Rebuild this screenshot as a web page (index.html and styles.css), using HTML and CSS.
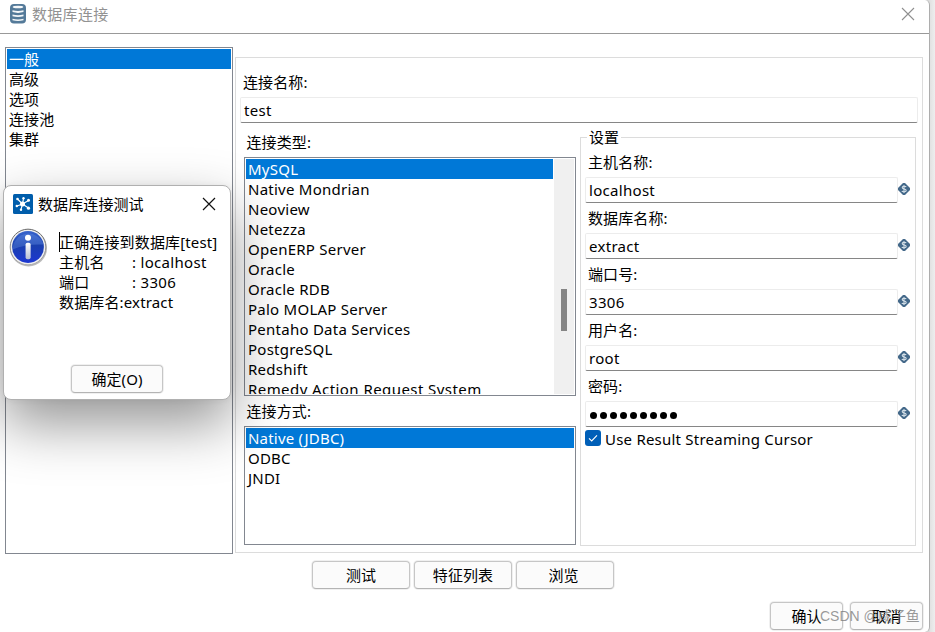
FILE: index.html
```
<!DOCTYPE html>
<html lang="zh-CN">
<head>
<meta charset="utf-8">
<title>数据库连接</title>
<link rel="stylesheet" href="styles.css">
</head>
<body>
<svg class="defs" width="0" height="0">
  <symbol id="var" viewBox="0 0 12 12">
    <path d="M5 0h2L12 5v2L7 12H5L0 7V5z" fill="#44698a"/>
    <path d="M8.2 3.9C7.5 3.100 4.200 2.800 4.200 4.600S8.200 5.700 8.200 7.400 4.600 9 3.800 8.100M6 2v8" fill="none" stroke="#d5e0e8" stroke-width="1.100"/>
  </symbol>
</svg>
<div class="window">
  <header class="titlebar">
    <svg class="db-icon" viewBox="0 0 18 22">
      <rect x="1" y="1" width="16" height="19.500" rx="4" fill="#547a99"/>
      <g fill="#f4f7f9"><ellipse cx="9" cy="4" rx="5.300" ry="1.300"/><path d="M3.500 7.300q5.500 1.600 11 0v1.800q-5.500 1.600-11 0zM3.500 11.500q5.500 1.600 11 0v1.800q-5.500 1.600-11 0zM3.500 15.700q5.500 1.600 11 0v1.500q-5.500 1.600-11 0z"/></g>
    </svg>
    <span class="title">数据库连接</span>
    <svg class="close" viewBox="0 0 14 14"><path d="M1 1l12 12M13 1L1 13" stroke="#8f8f8f" stroke-width="1.100"/></svg>
  </header>
  <div class="content">
    <ul class="list sidebar">
      <li class="selected">一般</li><li>高级</li><li>选项</li><li>连接池</li><li>集群</li>
    </ul>
    <main class="panel">
      <div class="label name-label">连接名称:</div>
      <div class="input">test</div>
      <div class="columns">
        <section class="types">
          <div class="label">连接类型:</div>
          <div class="list type-list">
            <ul class="rows">
              <li class="selected">MySQL</li><li>Native Mondrian</li><li>Neoview</li><li>Netezza</li><li>OpenERP Server</li><li>Oracle</li><li>Oracle RDB</li><li>Palo MOLAP Server</li><li>Pentaho Data Services</li><li>PostgreSQL</li><li>Redshift</li><li class="long">Remedy Action Request System</li>
            </ul>
            <div class="scrollbar"><div class="thumb"></div></div>
          </div>
          <div class="label access-label">连接方式:</div>
          <ul class="list access-list">
            <li class="selected">Native (JDBC)</li><li>ODBC</li><li>JNDI</li>
          </ul>
        </section>
        <section class="settings">
          <div class="legend">设置</div>
          <div class="field"><div class="label">主机名称:</div><div class="control"><div class="input">localhost</div><svg class="var"><use href="#var"/></svg></div></div>
          <div class="field"><div class="label">数据库名称:</div><div class="control"><div class="input">extract</div><svg class="var"><use href="#var"/></svg></div></div>
          <div class="field"><div class="label">端口号:</div><div class="control"><div class="input">3306</div><svg class="var"><use href="#var"/></svg></div></div>
          <div class="field"><div class="label">用户名:</div><div class="control"><div class="input">root</div><svg class="var"><use href="#var"/></svg></div></div>
          <div class="field"><div class="label">密码:</div><div class="control"><div class="input password"><i></i><i></i><i></i><i></i><i></i><i></i><i></i><i></i><i></i></div><svg class="var"><use href="#var"/></svg></div></div>
          <div class="check"><svg viewBox="0 0 16 16"><rect width="16" height="16" rx="3" fill="#005fb8"/><path d="M4 8.300l2.700 2.600L12 5.400" fill="none" stroke="#fff" stroke-width="1.100"/></svg><span>Use Result Streaming Cursor</span></div>
        </section>
      </div>
    </main>
  </div>
  <div class="actions"><div class="button">测试</div><div class="button">特征列表</div><div class="button">浏览</div></div>
  <div class="footer"><div class="button">确认</div><div class="button">取消</div></div>
</div>
<div class="dialog">
  <div class="dialog-title">
    <svg class="app-icon" viewBox="0 0 20 20">
      <rect width="20" height="20" rx="1.500" fill="#005dab"/>
      <path d="M9.500 10L4.500 5M9.500 10l1-5.500M9.500 10l6-3.500M9.500 10l6 4M9.500 10L8 15.500M9.500 10l-5.500 2" stroke="#fff" stroke-width="1.100"/>
      <g fill="#fff"><circle cx="9.500" cy="10" r="2.500"/><circle cx="4.500" cy="5" r="1.300"/><circle cx="10.500" cy="4.300" r="1.200"/><circle cx="15.500" cy="6.300" r="1.500"/><circle cx="15.500" cy="14.200" r="1.600"/><circle cx="8" cy="15.800" r="1.200"/><circle cx="3.800" cy="12" r="1.200"/></g>
    </svg>
    <span>数据库连接测试</span>
    <svg class="close" viewBox="0 0 14 14"><path d="M1 1l12 12M13 1L1 13" stroke="#111" stroke-width="1.200"/></svg>
  </div>
  <div class="dialog-body">
    <svg class="info" viewBox="0 0 40 40">
      <defs>
        <linearGradient id="blue" x1="0" y1="0" x2="0" y2="1"><stop offset="0" stop-color="#3864cc"/><stop offset=".45" stop-color="#1a3fae"/><stop offset="1" stop-color="#1d38d2"/></linearGradient>
        <linearGradient id="ring" x1="0" y1="0" x2="0" y2="1"><stop offset="0" stop-color="#666"/><stop offset="1" stop-color="#aaa"/></linearGradient>
        <linearGradient id="stem" x1="0" y1="0" x2="0" y2="1"><stop offset="0" stop-color="#fff"/><stop offset="1" stop-color="#b9c0d4"/></linearGradient>
      </defs>
      <circle cx="20" cy="20.500" r="19" fill="#bbb"/>
      <circle cx="19.500" cy="19.500" r="18.300" fill="#eee" stroke="url(#ring)"/>
      <circle cx="19.500" cy="19.500" r="16.300" fill="url(#blue)"/>
      <path d="M3.700 22a16.300 16.300 0 0 1 31.800-5Q18 16 3.700 22z" fill="#6b94e6" opacity=".35"/>
      <circle cx="19.500" cy="10" r="3.100" fill="#fff"/><rect x="17" y="15" width="5.200" height="17" rx="2" fill="url(#stem)"/>
    </svg>
    <div class="message">
      <div class="caret-line">正确连接到数据库[test]</div>
      <div class="pair"><span>主机名</span><span>: localhost</span></div>
      <div class="pair"><span>端口</span><span>: 3306</span></div>
      <div>数据库名:extract</div>
    </div>
  </div>
  <div class="button ok">确定(O)</div>
</div>
<div class="watermark">CSDN @咸子鱼</div>
</body>
</html>
```

FILE: styles.css
```
* { box-sizing: border-box; }
body {
  margin: 0;
  width: 935px;
  height: 632px;
  overflow: hidden;
  position: relative;
  background: linear-gradient(90deg, #d8d8d8 929px, #e2e2e2 930px, #eee 935px);
  color: #000;
  font: 15px/20px "Noto Sans", "Noto Sans CJK SC", sans-serif;
  letter-spacing: .1px;
  white-space: nowrap;
}
ul { list-style: none; margin: 0; padding: 0; }
svg { display: block; flex: none; }
.defs { position: absolute; }
.window {
  width: 930px;
  height: 632px;
  background: #fff;
  border-right: 1px solid #adadad;
  border-radius: 0 5px 5px 0;
}
.titlebar {
  height: 34px;
  display: flex;
  align-items: flex-start;
  padding: 4px 14px 0 9px;
  border-bottom: 1px solid #999;
  color: #929292;
}
.db-icon { width: 18px; height: 22px; margin-top: -1px; }
.title { margin-left: 5px; letter-spacing: .3px; }
.close { width: 14px; height: 14px; margin: 3px 0 0 auto; }
.content { display: flex; padding: 13px 6px 0 5px; }
.list { border: 1px solid #828790; padding: 1px; background: #fff; }
.list li { height: 20px; padding-left: 2px; }
.list .selected { background: #0078d7; color: #fff; }
.sidebar { width: 228px; height: 507px; }
.panel {
  width: 688px;
  height: 496px;
  margin: 10px 0 0 2px;
  padding: 14px 5px 0 5px;
  border: 1px solid #dcdcdc;
}
.name-label { margin-left: 2px; }
.label { height: 20px; }
.input {
  height: 26px;
  padding: 2px 0 0 3px;
  border: 1px solid #ececec;
  border-bottom-color: #868686;
  border-radius: 2px;
  letter-spacing: .3px;
}
.panel > .input { margin: 5px -1px 0 -1px; }
.columns { display: flex; }
.types { width: 332px; margin-left: 3px; padding-top: 9px; }
.types .label { padding-left: 2.5px; }
.type-list { display: flex; height: 239px; margin-top: 5px; letter-spacing: .25px; }
.long { letter-spacing: .43px; }
.rows { width: 307px; height: 235px; overflow: hidden; }
.scrollbar { width: 20px; margin-left: 1px; background: #f0f0f0; padding: 130px 0 0 7px; }
.thumb { width: 6px; height: 42px; background: #858585; }
.access-label { margin-top: 5px; }
.access-list { height: 119px; margin-top: 5px; letter-spacing: .2px; }
.settings {
  width: 336px;
  height: 409px;
  margin: 14px 0 0 4px;
  padding: 0 4px;
  border: 1px solid #dcdcdc;
}
.legend { width: 34px; height: 20px; margin: -11px 0 5px 2px; padding-left: 2px; background: #fff; }
.field { height: 56px; }
.field .label { padding-left: 3px; }
.control { display: flex; margin-top: 5px; }
.control .input { width: 313px; }
.var { width: 12px; height: 12px; margin-top: 6px; }
.password { display: flex; gap: 3px; padding: 10px 0 0 4px; }
.password i { width: 7px; height: 7px; border-radius: 50%; background: #000; }
.check { display: flex; gap: 4px; height: 20px; margin-top: -3px; letter-spacing: .22px; }
.check svg { width: 16px; height: 16px; margin-top: 1px; }
.button {
  height: 28px;
  border: 1px solid #c6c6c6;
  border-bottom-color: #b4b4b4;
  border-radius: 4px;
  background: #fbfbfb;
  box-shadow: 0 0 0 1px #f0f0f0;
  padding-top: 3px;
  text-align: center;
}
.actions { display: flex; gap: 4px; padding: 7px 0 0 312px; }
.actions .button { width: 98px; }
.actions .button:last-child { padding-right: 3px; }
.footer { display: flex; gap: 7px; padding: 13px 0 0 770px; }
.footer .button { width: 73px; }
.dialog {
  position: absolute;
  left: 3px;
  top: 185px;
  width: 228px;
  height: 215px;
  background: #fff;
  border: 1px solid #b0b0b0;
  border-radius: 8px;
  box-shadow: 0 24px 56px rgba(0, 0, 0, .42), 0 0 6px rgba(0, 0, 0, .06);
}
.dialog-title { display: flex; height: 38px; padding: 8px 14px 0 9px; }
.app-icon { width: 20px; height: 20px; margin-right: 5px; }
.dialog-body { display: flex; height: 141px; padding: 4px 0 0 5px; }
.info { width: 39px; height: 39px; margin-right: 11px; }
.message { padding-top: 4px; letter-spacing: .15px; }
.caret-line { border-left: 1px solid #000; text-indent: -1px; }
.pair { display: grid; grid-template-columns: 73px auto; letter-spacing: .3px; }
.ok { width: 92px; margin-left: 67px; }
.watermark {
  position: absolute;
  left: 820px;
  top: 606px;
  color: rgba(120, 120, 120, .75);
  font: 14px/20px "Liberation Sans", "Noto Sans CJK SC", sans-serif;
  letter-spacing: 0;
}
```
